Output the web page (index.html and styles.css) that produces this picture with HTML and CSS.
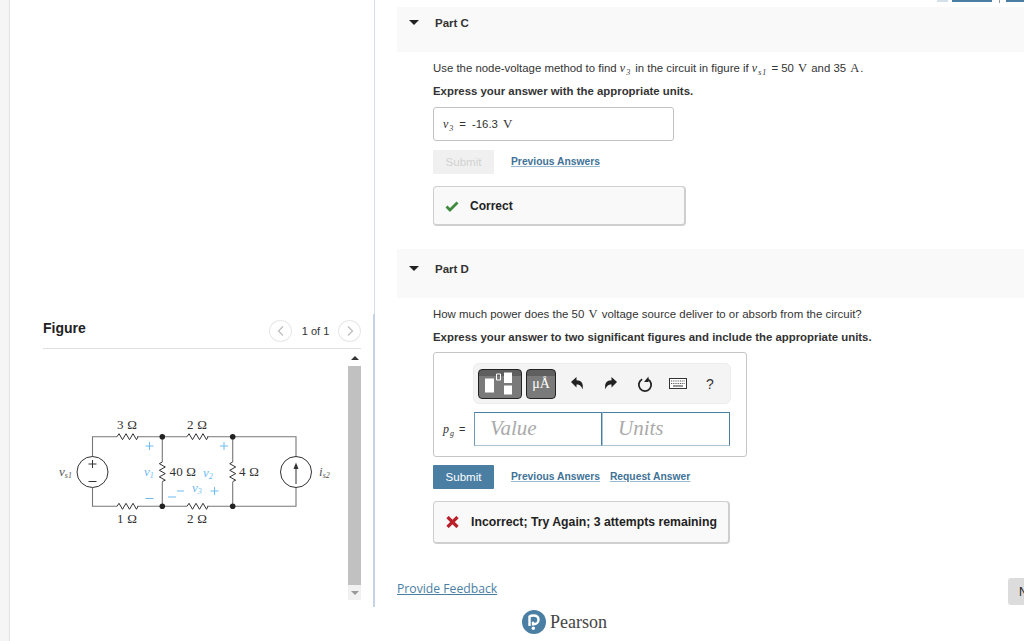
FILE: index.html
```html
<!DOCTYPE html>
<html lang="en">
<head>
<meta charset="utf-8">
<title>Part C and D</title>
<link rel="stylesheet" href="styles.css">
</head>
<body>
<div class="page">
  <div class="gutter"></div>
  <aside class="left">
    <div class="figure-head">
      <h2 class="figure-title">Figure</h2>
      <div class="pager">
        <span class="pager-btn"><svg width="10" height="12" viewBox="0 0 10 12"><path d="M7 1.500 2.500 6 7 10.500" fill="none" stroke="#bbb" stroke-width="1.200"/></svg></span>
        <span class="pager-text">1 of 1</span>
        <span class="pager-btn"><svg width="10" height="12" viewBox="0 0 10 12"><path d="M3 1.500 7.500 6 3 10.500" fill="none" stroke="#bbb" stroke-width="1.200"/></svg></span>
      </div>
    </div>
    <div class="figure-body">
      <div class="figure-canvas">
        <svg class="circuit" width="305" height="258" viewBox="43 349 305 258">
          <g fill="none" stroke="#777" stroke-width="1.100">
            <path d="M92.500 456.500V436.700H117M137 436.700H187M207 436.700H296V456.500M296 487.500V506.300H207M187 506.300H137M117 506.300H92.500V487.500"/>
            <path d="M162.300 436.700V462M162.300 482V506.300M232.700 436.700V462M232.700 482V506.300"/>
          </g>
          <g fill="none" stroke="#333" stroke-width="1">
            <path d="M117 436.700l2-3 3.500 6 3.500-6 3.500 6 3.500-6 3.500 6 1.500-3"/>
            <path d="M187 436.700l2-3 3.500 6 3.500-6 3.500 6 3.500-6 3.500 6 1.500-3"/>
            <path d="M117 506.300l2-3 3.500 6 3.500-6 3.500 6 3.500-6 3.500 6 1.500-3"/>
            <path d="M187 506.300l2-3 3.500 6 3.500-6 3.500 6 3.500-6 3.500 6 1.500-3"/>
            <path d="M162.300 462l-3 1.700 6 3.300-6 3.300 6 3.300-6 3.300 6 3.300-3 1.300"/>
            <path d="M232.700 462l-3 1.700 6 3.300-6 3.300 6 3.300-6 3.300 6 3.300-3 1.300"/>
            <circle cx="92.500" cy="472" r="15.500"/>
            <circle cx="296" cy="472" r="15.500"/>
            <path d="M296 484V468"/>
            <path d="M88.500 464h8M92.500 460v8M88.500 481.500h8"/>
          </g>
          <path d="M296 462.500l-2.500 6.500h5z" fill="#333"/>
          <g fill="#222">
            <circle cx="162.300" cy="436.700" r="2.800"/>
            <circle cx="232.700" cy="436.700" r="2.800"/>
            <circle cx="162.300" cy="506.300" r="2.800"/>
            <circle cx="232.700" cy="506.300" r="2.800"/>
          </g>
          <g class="c-label">
            <text x="127" y="429">3 Ω</text>
            <text x="197" y="429">2 Ω</text>
            <text x="127" y="523">1 Ω</text>
            <text x="197" y="523">2 Ω</text>
            <text x="169.500" y="476">40 Ω</text>
            <text x="239" y="476">4 Ω</text>
          </g>
          <g class="c-var">
            <text x="59" y="476">v<tspan class="c-sub" dy="2">s1</tspan></text>
            <text x="319" y="476">i<tspan class="c-sub" dy="2">s2</tspan></text>
          </g>
          <g class="c-blue">
            <text x="144" y="476">v<tspan class="c-sub" dy="2">1</tspan></text>
            <text x="203" y="477">v<tspan class="c-sub" dy="2">2</tspan></text>
            <text x="192" y="492">v<tspan class="c-sub" dy="2">3</tspan></text>
          </g>
          <g fill="none" stroke="#6cbcf2" stroke-width="1">
            <path d="M145.500 446h8M149.500 442v8"/>
            <path d="M220 446h8M224 442v8"/>
            <path d="M145.500 498.500h8M168 497h8M177 491h7"/>
            <path d="M210.500 491h8M214.500 487v8"/>
          </g>
        </svg>
      </div>
      <div class="scrollbar">
        <div class="scroll-up"><span class="tri-up"></span></div>
        <div class="scroll-thumb"></div>
        <div class="scroll-down"><span class="tri-down"></span></div>
      </div>
    </div>
  </aside>
  <div class="divider"><div class="divider-top"></div><div class="divider-bottom"></div></div>
  <main class="right">
    <div class="top-links"><span class="tl tl-a"></span><span class="tl tl-b"></span><span class="tl tl-c"></span><span class="tl tl-d"></span></div>

    <section class="part part-c">
      <header class="part-head"><span class="caret"></span><span class="part-name">Part C</span></header>
      <div class="part-body">
        <p class="prompt">Use the node-voltage method to find <i class="m">v<sub>3</sub></i> in the circuit in figure if <i class="m">v<sub>s1</sub></i> = 50 <span class="mr">V</span> and 35 <span class="mr">A</span>.</p>
        <p class="instr">Express your answer with the appropriate units.</p>
        <div class="answer-box"><i class="m">v<sub>3</sub></i> <span class="eq">=</span> <span class="ans">-16.3</span> <span class="mr">V</span></div>
        <div class="actions actions-c">
          <button class="btn btn-off" type="button">Submit</button>
          <a class="link" href="#">Previous Answers</a>
        </div>
        <div class="feedback fb-correct">
          <svg width="14" height="12" viewBox="0 0 14 12"><path d="M1.500 6.500 5 10 12.500 2.500" fill="none" stroke="#3f8a3c" stroke-width="2.800"/></svg>
          <span>Correct</span>
        </div>
      </div>
    </section>

    <section class="part part-d">
      <header class="part-head"><span class="caret"></span><span class="part-name">Part D</span></header>
      <div class="part-body">
        <p class="prompt">How much power does the 50 <span class="mr">V</span> voltage source deliver to or absorb from the circuit?</p>
        <p class="instr">Express your answer to two significant figures and include the appropriate units.</p>
        <div class="editor">
          <div class="toolbar">
            <span class="tool tool-tpl">
              <svg width="36" height="25" viewBox="0 0 36 25"><path fill="#fff" d="M3 7.500h9v14H3zM22 1.500h8V12h-8zM22 14.500h8v9h-8z"/><path fill="none" stroke="#fff" d="M14.500 3h4v6h-4z"/></svg>
            </span>
            <span class="tool tool-unit">μÅ</span>
            <svg class="ti ti-undo" width="13" height="13" viewBox="0 0 13 13"><path d="M0 5 5.500 0v3.200C10 3.200 13 6 11.500 12.500 10.500 9 9 7.500 5.500 7.500V10.500z" fill="#222"/></svg>
            <svg class="ti ti-redo" width="13" height="13" viewBox="0 0 13 13"><path d="M13 5 7.500 0v3.200C3 3.200 0 6 1.500 12.500 2.500 9 4 7.500 7.500 7.500V10.500z" fill="#222"/></svg>
            <svg class="ti ti-reset" width="16" height="16" viewBox="0 0 16 16"><path d="M5.200 3.300a6.200 6.200 0 1 0 5.600 0" fill="none" stroke="#222" stroke-width="1.800"/><path d="M11.500 .5v5.500H7z" fill="#222"/></svg>
            <svg class="ti ti-kbd" width="18" height="11" viewBox="0 0 18 11"><rect x=".5" y=".5" width="17" height="10" fill="#fff" stroke="#333"/><path d="M2 3h14M2 5.500h14" stroke="#555" stroke-width="1.200" stroke-dasharray="1 .8"/><path d="M4 8h10" stroke="#555" stroke-width="1.200"/></svg>
            <span class="ti ti-help">?</span>
          </div>
          <div class="input-row">
            <span class="var-label"><i class="m">p<sub>g</sub></i> =</span>
            <span class="field">Value</span>
            <span class="field">Units</span>
          </div>
        </div>
        <div class="actions actions-d">
          <button class="btn btn-on" type="button">Submit</button>
          <a class="link" href="#">Previous Answers</a>
          <a class="link" href="#">Request Answer</a>
        </div>
        <div class="feedback fb-wrong">
          <svg width="13" height="12" viewBox="0 0 13 12"><path d="M1.500 1 11.500 11M11.500 1 1.500 11" fill="none" stroke="#b8202a" stroke-width="3.200"/></svg>
          <span>Incorrect; Try Again; 3 attempts remaining</span>
        </div>
      </div>
    </section>

    <a class="provide" href="#">Provide Feedback</a>
    <div class="pearson">
      <svg width="24" height="24" viewBox="0 0 24 24"><circle cx="12" cy="12" r="12" fill="#4a7ea3"/><path d="M7.500 16V6.500c1-.7 2.500-1 4-1 3 0 5 1.700 5 4.300s-2 4.400-4.800 4.400h-.7v-2.400" fill="none" stroke="#fff" stroke-width="2.400"/><circle cx="11.300" cy="18.300" r="1.700" fill="#fff"/></svg>
      <span class="pearson-name">Pearson</span>
    </div>
  </main>
  <div class="next-btn">N</div>
</div>
</body>
</html>
```
FILE: styles.css
```css
* { box-sizing: border-box; }
html, body { margin: 0; padding: 0; height: 641px; overflow: hidden; background: #fff; }
body { font-family: "Liberation Sans", Arial, sans-serif; color: #2b2b2b; }
p, h2 { margin: 0; }
a { color: #3f7296; }

.page { display: flex; width: 1024px; height: 641px; position: relative; overflow: hidden; }
.gutter { width: 10px; background: #f5f5f5; border-right: 1px solid #e2e2e2; flex: none; }

.left { width: 363px; flex: none; padding: 319px 12px 0 33px; }
.figure-head { display: flex; justify-content: space-between; align-items: flex-start; height: 30px; border-bottom: 1px solid #dcdfe3; width: 318px; }
.figure-title { font-size: 14px; font-weight: 700; color: #222; line-height: 18px; }
.pager { display: flex; align-items: center; margin-top: 1px; }
.pager-btn { width: 23px; height: 22px; border: 1px solid #e8e8e8; border-radius: 50%; display: flex; align-items: center; justify-content: center; }
.pager-text { font-size: 11px; width: 46px; padding-left: 1px; text-align: center; color: #333; }

.figure-body { display: flex; width: 318px; height: 251px; }
.figure-canvas { width: 305px; height: 251px; overflow: hidden; }
.circuit { display: block; }
.c-label text { font: 13px "Liberation Serif", serif; fill: #333; text-anchor: middle; letter-spacing: .2px; }
.c-label text:nth-child(5), .c-label text:nth-child(6) { text-anchor: start; }
.c-var text { font: italic 13px "Liberation Serif", serif; fill: #555; }
.c-blue text { font: italic 13px "Liberation Serif", serif; fill: #6cbcf2; }
.c-sub { font-size: 8px; }

.scrollbar { width: 13px; margin-top: 1px; display: flex; flex-direction: column; }
.scroll-up { height: 16px; display: flex; justify-content: center; align-items: center; }
.scroll-thumb { height: 219px; background: #c1c1c1; }
.scroll-down { height: 15px; background: #f1f1f1; display: flex; justify-content: center; align-items: center; }
.tri-up { border: 4px solid transparent; border-top: 0; border-bottom: 4px solid #333; }
.tri-down { border: 4px solid transparent; border-bottom: 0; border-top: 4px solid #999; }

.divider { width: 2px; flex: none; display: flex; flex-direction: column; height: 607px; }
.divider-top { height: 314px; width: 1px; margin-left: 1px; background: #d5deea; }
.divider-bottom { flex: 1; background: #c6d3e6; }

.right { flex: 1; padding-left: 22px; min-width: 0; }
.top-links { height: 7px; display: flex; align-items: flex-start; }
.tl { display: block; height: 2px; }
.tl-a { width: 11px; margin-left: 540px; background: #d5e1ea; }
.tl-b { width: 40px; margin-left: 4px; background: #4a7ea3; }
.tl-c { width: 1px; margin-left: 7px; height: 3px; background: #999; }
.tl-d { width: 18px; margin-left: 6px; background: #4a7ea3; }

.part-head { height: 45px; background: #f9f9f9; display: flex; align-items: flex-start; padding: 9px 0 0 12px; }
.caret { width: 0; height: 0; margin-top: 4px; border: 5px solid transparent; border-bottom: 0; border-top: 5px solid #222; }
.part-name { margin-left: 16px; font-size: 11.500px; font-weight: 700; color: #333; line-height: 14px; }
.part-body { padding-left: 36px; }
.part-c .part-body { padding-top: 9px; }
.part-d { margin-top: 23px; }
.part-d .part-head { height: 49px; padding-top: 13px; }
.part-d .part-body { padding-top: 9px; }

.prompt { font-size: 11.400px; line-height: 15px; color: #333; }
.part-d .prompt { font-size: 11.450px; }
.instr { font-size: 11.400px; line-height: 15px; margin-top: 8px; font-weight: 700; color: #333; }
.m { font-family: "Liberation Serif", serif; font-style: italic; font-size: 12px; letter-spacing: 1px; margin-right: 1px; }
.mr { font-family: "Liberation Serif", serif; font-size: 12.500px; margin: 0 1px; }
sub { font-size: 8px; line-height: 0; }

.answer-box { width: 241px; height: 34px; margin-top: 8px; border: 1px solid #c2c2c2; border-radius: 3px; display: flex; align-items: center; gap: 4px; padding-left: 9px; font-size: 11.400px; color: #333; }
.answer-box .eq { margin-right: 2px; }
.answer-box .mr { font-size: 13px; margin-left: 1px; }
.actions { display: flex; align-items: center; }
.actions-c { margin-top: 9px; }
.actions-d { margin-top: 8px; }
.btn { width: 61px; height: 24px; border: 0; border-radius: 1px; font: 11.500px "Liberation Sans", Arial, sans-serif; padding: 0; }
.btn-off { background: #f0f0f0; color: #d2d2d2; }
.btn-on { background: #4a7ea3; color: #fff; }
.link { font-size: 10.300px; font-weight: 700; color: #3f7296; margin: 0 0 1px 17px; text-decoration-color: #9bb9cf; }
.actions-d .link + .link { margin-left: 10px; }

.feedback { display: flex; align-items: center; background: #f9f9f9; border: 1px solid #cfcfcf; border-bottom-width: 2px; border-right-width: 2px; border-radius: 4px; font-size: 12px; font-weight: 700; color: #222; }
.fb-correct { width: 253px; height: 40px; margin-top: 12px; padding-left: 11px; gap: 11px; }
.fb-wrong { width: 297px; height: 43px; margin-top: 12px; padding-left: 12px; gap: 12px; font-size: 12.250px; }

.editor { width: 314px; height: 105px; margin-top: 7px; border: 1px solid #c6c6c6; border-radius: 3px; padding: 10px 0 0 39px; }
.toolbar { width: 258px; height: 41px; background: #f4f4f4; border: 1px solid #ececec; border-radius: 6px; display: flex; align-items: center; padding-left: 4px; }
.tool { display: flex; align-items: center; justify-content: center; height: 30px; border-radius: 4px; border: 1px solid #222; background: linear-gradient(#5f5f5f 0 6px, #7a7a7a 6px); color: #fff; }
.tool-tpl { width: 44px; }
.tool-unit { width: 30px; margin-left: 4px; font: 14px "Liberation Serif", serif; }
.ti { flex: none; }
.ti-undo { margin-left: 15px; }
.ti-redo { margin-left: 20px; }
.ti-reset { margin-left: 20px; }
.ti-kbd { margin-left: 16px; }
.ti-help { margin-left: 19px; font-size: 14px; color: #333; }
.input-row { display: flex; align-items: center; margin: 8px 0 0 -30px; }
.var-label { width: 31px; font-size: 11px; color: #333; }
.field { width: 128px; height: 34px; border: 1px solid #4a7ea3; border-bottom-color: #a9c3d5; border-left-color: #6f9ab7; padding-left: 15px; font: italic 21px/31px "Liberation Serif", serif; color: #aaa; }
.field + .field { border-left-color: #a9c3d5; }

.provide { display: block; margin-top: 36px; font: 12.200px "Open Sans", sans-serif; color: #4a7ea3; width: max-content; }
.pearson { display: flex; align-items: center; gap: 4px; margin: 13px 0 0 125px; }
.pearson-name { font: 18px "Liberation Serif", serif; color: #444; }

.next-btn { position: absolute; left: 1008px; top: 578px; width: 30px; height: 27px; background: #dcdcdc; border-radius: 3px; padding: 7px 0 0 11px; font-size: 12px; color: #222; }
```
